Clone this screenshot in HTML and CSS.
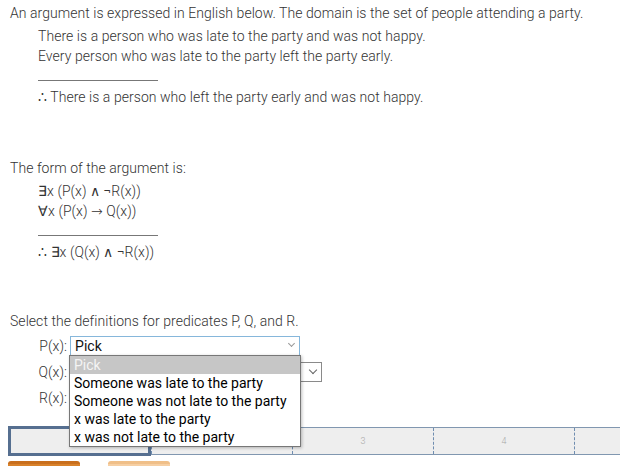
FILE: index.html
```html
<!DOCTYPE html>
<html lang="en">
<head>
  <meta charset="UTF-8">
  <meta name="viewport" content="width=device-width, initial-scale=1.0">
  <title>Predicate argument</title>
  <link rel="stylesheet" href="styles.css">
</head>
<body>
  <div class="question">
    <p class="lead">An argument is expressed in English below. The domain is the set of people attending a party.</p>
    <div class="argument">
      <div>There is a person who was late to the party and was not happy.</div>
      <div>Every person who was late to the party left the party early.</div>
      <div class="rule"></div>
      <div>∴ There is a person who left the party early and was not happy.</div>
    </div>

    <p class="lead form">The form of the argument is:</p>
    <div class="argument">
      <div>∃x (P(x) ∧ ¬R(x))</div>
      <div>∀x (P(x) <span class="implies">→</span> Q(x))</div>
      <div class="rule"></div>
      <div>∴ ∃x (Q(x) ∧ ¬R(x))</div>
    </div>

    <p class="lead select-title">Select the definitions for predicates P, Q, and R.</p>
    <div class="predicates">
      <div class="row">
        <span class="label">P(x):</span>
        <div class="picker">
          <div class="select focused wide">Pick<span class="arrow"></span></div>
          <ul class="options">
            <li class="current">Pick</li>
            <li>Someone was late to the party</li>
            <li>Someone was not late to the party</li>
            <li>x was late to the party</li>
            <li>x was not late to the party</li>
          </ul>
        </div>
      </div>
      <div class="row">
        <span class="label">Q(x):</span>
        <div class="select boxed">Pick<span class="arrow"></span></div>
      </div>
      <div class="row">
        <span class="label">R(x):</span>
        <div class="select boxed wide">Pick<span class="arrow"></span></div>
      </div>
    </div>
  </div>

  <div class="steps">
    <div class="step active">1</div>
    <div class="step">2</div>
    <div class="step">3</div>
    <div class="step">4</div>
    <div class="step"></div>
  </div>

  <div class="actions">
    <button class="btn primary" title="Check"></button>
    <button class="btn light" title="Next"></button>
  </div>
</body>
</html>
```

FILE: styles.css
```css
body {
  margin: 0 0 0 8px;
  font-family: Roboto, "Liberation Sans", sans-serif;
  font-size: 14px;
  font-weight: 300;
  color: #333;
  background: #fff;
  overflow: hidden;
}
.question {
  padding-left: 2px;
  letter-spacing: 0.05px;
}
.lead {
  margin: 0;
  padding-top: 3px;
  line-height: 20px;
}
.form {
  padding-top: 51px;
}
.select-title {
  padding-top: 49px;
}
.argument {
  margin-left: 28px;
  margin-top: 3px;
  line-height: 20px;
}
.implies {
  font-family: "DejaVu Sans", sans-serif;
  font-size: 14px;
  line-height: 1;
}
.rule {
  width: 120px;
  border-top: 1px solid #777;
  margin: 14px 0 6px;
}
.predicates {
  margin-top: 5px;
}
.row {
  display: flex;
  align-items: center;
  height: 20px;
  margin-bottom: 6px;
}
.label {
  width: 57px;
  text-align: right;
  padding-right: 3px;
}
.picker {
  position: relative;
}
.select {
  position: relative;
  width: 252px;
  height: 20px;
  box-sizing: border-box;
  border: 1px solid #8a8a8a;
  padding-left: 4px;
  line-height: 18px;
  font-weight: 400;
  color: #111;
  background: #fff;
}
.select.wide {
  width: 230px;
}
.select.focused {
  border-color: #86b7db;
}
.arrow {
  position: absolute;
  right: 5px;
  top: 4px;
  width: 5px;
  height: 5px;
  border-right: 1px solid #666;
  border-bottom: 1px solid #666;
  transform: rotate(45deg);
}
.select.focused .arrow {
  border-color: #999;
  width: 4px;
  height: 4px;
}
.options {
  position: absolute;
  left: -1px;
  top: 19px;
  z-index: 2;
  width: 232px;
  margin: 0;
  padding: 0;
  list-style: none;
  box-sizing: border-box;
  border: 1px solid #777;
  background: #fff;
  box-shadow: 1px 1px 3px rgba(0,0,0,0.25);
  font-weight: 400;
  color: #000;
  letter-spacing: 0;
}
.options li {
  height: 18px;
  line-height: 18px;
  padding-left: 4px;
}
.options .current {
  background: #c6c6c6;
  color: #f4f4f4;
}
.steps {
  display: flex;
  margin-top: 19px;
  height: 28px;
  box-sizing: border-box;
  border-top: 1px solid #8197b0;
  border-bottom: 1px solid #8197b0;
  background: #eeeeee;
}
.step {
  flex: 0 0 141px;
  box-sizing: border-box;
  border-left: 1px dashed #6f8db0;
  text-align: center;
  line-height: 26px;
  font-size: 9px;
  color: #aaa;
}
.step:first-child {
  flex-basis: 143px;
  border-left: none;
}
.step.active {
  border: 3px solid #566f90;
  margin-top: -2px;
  height: 30px;
  color: transparent;
}
.actions {
  display: flex;
  gap: 28px;
  margin-top: 6px;
}
.btn {
  height: 30px;
  border: none;
  border-top: 3px solid;
  border-radius: 3px 3px 0 0;
}
.btn.primary {
  width: 72px;
  background: #d9822b;
  border-color: #c96f1d;
}
.btn.light {
  width: 62px;
  background: #f6cfa3;
  border-color: #f0bf88;
}
```
